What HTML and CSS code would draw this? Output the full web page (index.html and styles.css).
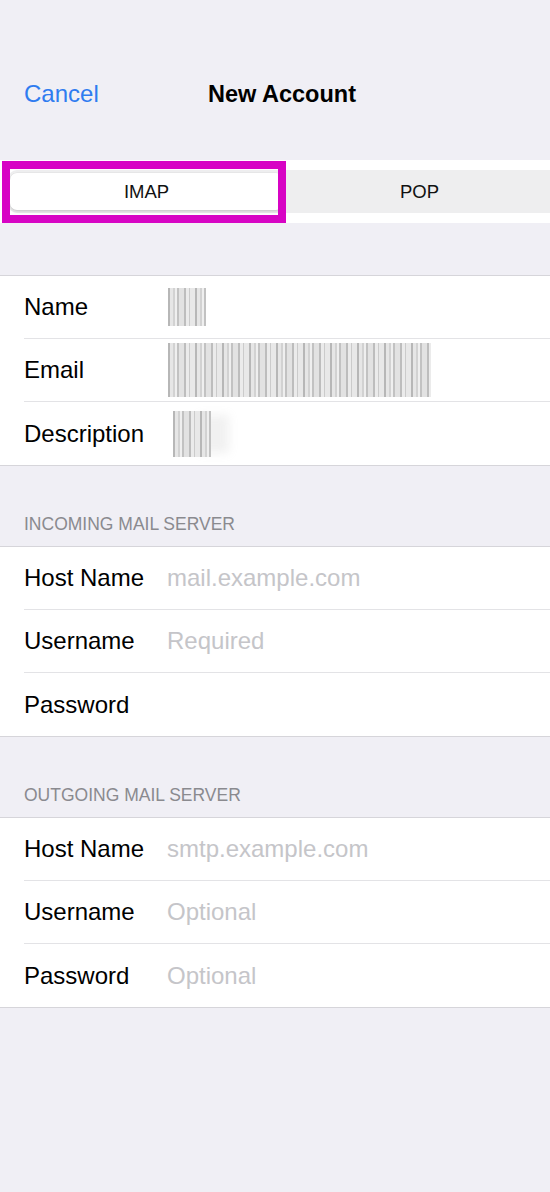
FILE: index.html
```html
<!DOCTYPE html>
<html lang="en">
<head>
  <meta charset="UTF-8" />
  <meta name="viewport" content="width=device-width, initial-scale=1.0"/>
  <title>New Account</title>
  <link rel="stylesheet" href="styles.css">
</head>
<body>
  <!-- Barra superior -->
  <div class="nav">
    <span class="nav-cancel">Cancel</span>
    <span class="nav-title">New Account</span>
    <span></span>
  </div>

  <!-- Selector IMAP / POP -->
  <div class="segment-strip">
    <div class="segment">
      <div class="segment-item active">IMAP</div>
      <div class="segment-item">POP</div>
    </div>
    <div class="highlight"></div>
  </div>

  <!-- Datos de la cuenta -->
  <div class="group first">
    <div class="row">
      <span class="label">Name</span>
      <span class="smudge smudge-name"></span>
    </div>
    <div class="row">
      <span class="label">Email</span>
      <span class="smudge smudge-email"></span>
    </div>
    <div class="row">
      <span class="label">Description</span>
      <span class="smudge smudge-desc"></span>
    </div>
  </div>

  <div class="section-title">INCOMING MAIL SERVER</div>
  <div class="group">
    <div class="row">
      <span class="label">Host Name</span>
      <span class="placeholder">mail.example.com</span>
    </div>
    <div class="row">
      <span class="label">Username</span>
      <span class="placeholder">Required</span>
    </div>
    <div class="row">
      <span class="label">Password</span>
    </div>
  </div>

  <div class="section-title">OUTGOING MAIL SERVER</div>
  <div class="group">
    <div class="row">
      <span class="label">Host Name</span>
      <span class="placeholder">smtp.example.com</span>
    </div>
    <div class="row">
      <span class="label">Username</span>
      <span class="placeholder">Optional</span>
    </div>
    <div class="row">
      <span class="label">Password</span>
      <span class="placeholder">Optional</span>
    </div>
  </div>
</body>
</html>
```

FILE: styles.css
```css
* { box-sizing: border-box; margin: 0; padding: 0; }
body {
  font-family: "Liberation Sans", Arial, sans-serif;
  background-color: #f0eff5;
  min-height: 100vh;
  color: #000;
}

/* Barra superior */
.nav {
  height: 160px;
  padding-top: 80px;
  display: grid;
  grid-template-columns: 1fr auto 1fr;
  align-items: start;
  line-height: 28px;
}
.nav-cancel {
  padding-left: 24px;
  font-size: 24px;
  color: #2f7cf0;
}
.nav-title {
  padding-left: 14px;
  font-size: 23.5px;
  font-weight: bold;
}

/* Selector IMAP / POP */
.segment-strip {
  position: relative;
  height: 63px;
  background: #fff;
  padding: 10px 0 10px 8px;
  overflow: hidden;
}
.segment {
  width: 550px;
  height: 43px;
  background: #eeeeef;
  border-radius: 9px;
  display: flex;
  padding: 3px 2px;
}
.segment-item {
  flex: 1;
  display: flex;
  align-items: center;
  justify-content: center;
  font-size: 18.5px;
  color: #111;
  border-radius: 7px;
}
.segment-item.active {
  background: #fff;
  box-shadow: 0 2px 3px rgba(0,0,0,0.12), 0 0 0 0.5px rgba(0,0,0,0.06);
}
.highlight {
  position: absolute;
  left: 2px;
  top: 1px;
  width: 284px;
  height: 62px;
  border: 8px solid #d704c4;
}

/* Grupos de filas */
.group {
  background: #fff;
  border-top: 1px solid #d6d5da;
  border-bottom: 1px solid #d6d5da;
}
.group.first { margin-top: 52px; }
.row {
  height: 63px;
  margin-left: 24px;
  display: flex;
  align-items: center;
  border-bottom: 1px solid #e3e3e6;
  font-size: 24px;
}
.row:last-child { border-bottom: none; }
.label { width: 143px; flex-shrink: 0; }
.placeholder { color: #c5c5c9; }

.section-title {
  padding: 47px 24px 11px;
  line-height: 22px;
  font-size: 17.5px;
  color: #8a8a8f;
}

/* Texto borroso de los campos */
.smudge {
  display: block;
  filter: blur(0.7px);
  background:
    repeating-linear-gradient(90deg,
      #b7b7b7 0 2px, #e6e6e6 2px 5px, #d2d2d2 5px 7px, #efefef 7px 9px,
      #c2c2c2 9px 11px, #e2e2e2 11px 16px, #bdbdbd 16px 18px, #ebebeb 18px 21px,
      #cbcbcb 21px 22px, #e8e8e8 22px 27px);
}
.smudge-name {
  width: 38px;
  height: 38px;
  margin-left: 1px;
}
.smudge-email {
  width: 263px;
  height: 54px;
  margin-left: 1px;
}
.smudge-desc {
  width: 38px;
  height: 46px;
  margin-left: 6px;
  box-shadow: 22px 0 10px -4px rgba(240,240,240,0.9);
}
```
